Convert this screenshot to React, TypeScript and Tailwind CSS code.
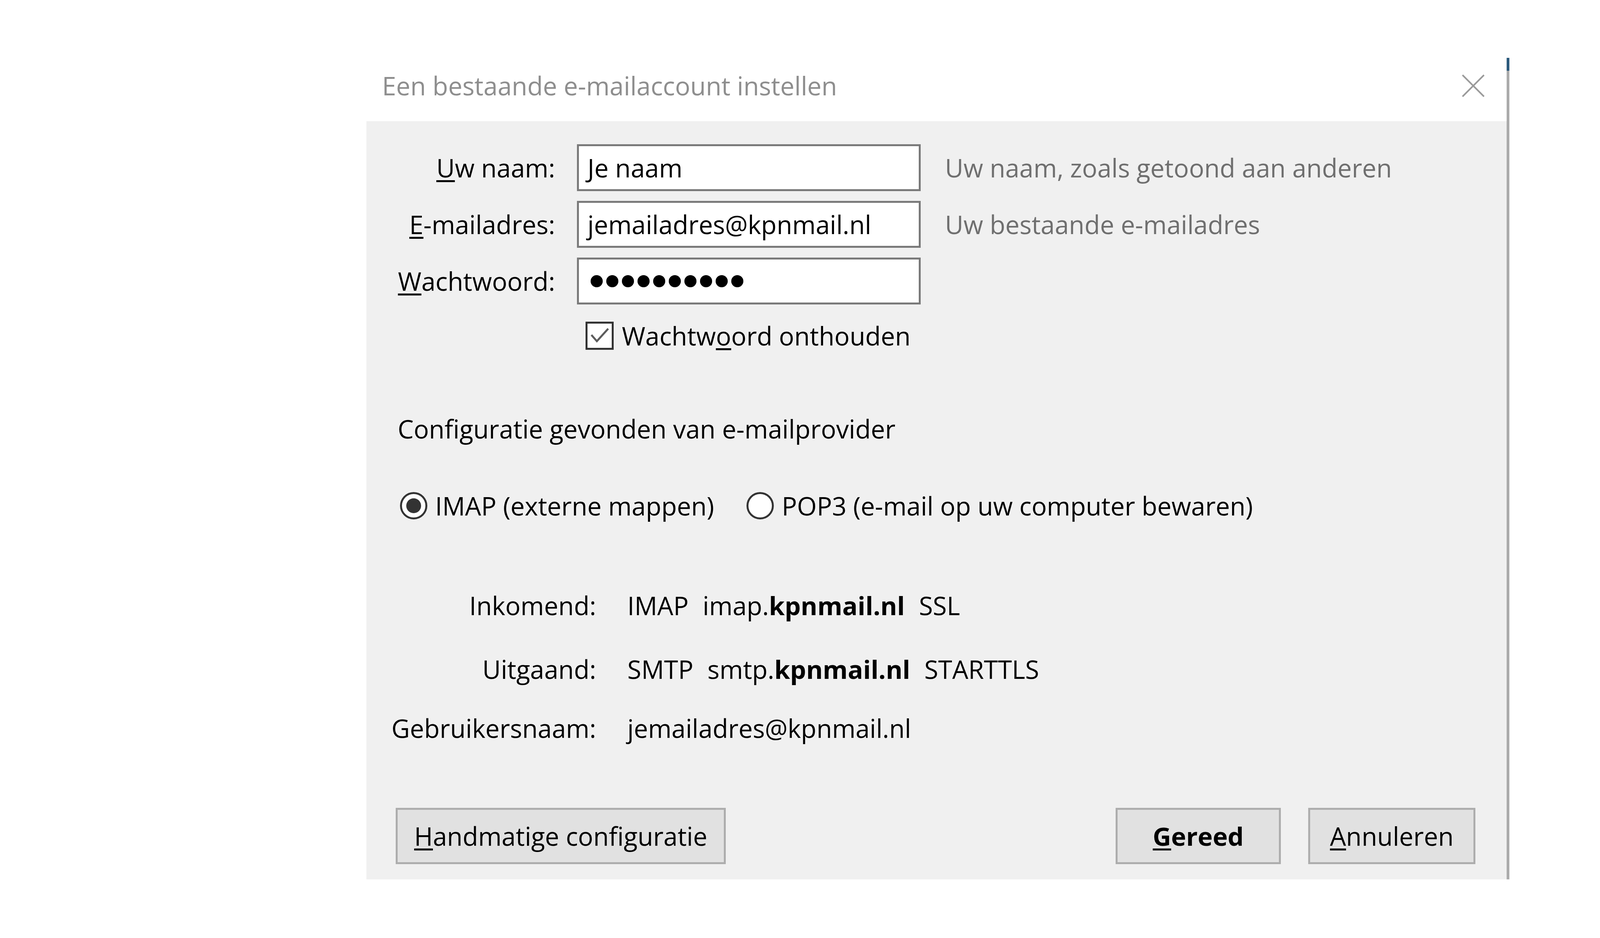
import React from 'react'

// Dialoog "Een bestaande e-mailaccount instellen" (Thunderbird, Windows-stijl)

const FONT = { fontFamily: '"Open Sans", "Noto Sans", Arial, sans-serif' }

function Mn({ children }: { children: React.ReactNode }) {
  // toegangstoets-onderstreping
  return <span className="underline decoration-[5px] underline-offset-[7px]">{children}</span>
}

function Field({ label, value, hint, password }: { label: React.ReactNode; value?: string; hint?: string; password?: boolean }) {
  return (
    <div className="flex items-center h-[120px]">
      <div className="w-[483px] text-right text-black leading-none">{label}</div>
      <div className="ml-[56px] w-[880px] h-[120px] bg-white border-[5px] border-[#7a7a7a] flex items-center pl-[22px] leading-none text-black">
        {password ? (
          <div className="flex gap-[9px] pl-[8px]">
            {Array.from({ length: 10 }).map((_, i) => (
              <span key={i} className="w-[31px] h-[31px] rounded-full bg-black" />
            ))}
          </div>
        ) : (
          value
        )}
      </div>
      {hint && <div className="ml-[62px] text-[#6f6f6f] leading-none">{hint}</div>}
    </div>
  )
}

function Radio({ checked, children }: { checked?: boolean; children: React.ReactNode }) {
  return (
    <div className="flex items-center">
      <span className="w-[70px] h-[70px] rounded-full border-[5px] border-[#333333] bg-white flex items-center justify-center">
        {checked && <span className="w-[38px] h-[38px] rounded-full bg-[#333333]" />}
      </span>
      <span className="ml-[20px] leading-none">{children}</span>
    </div>
  )
}

function ServerRow({ label, children }: { label: string; children: React.ReactNode }) {
  return (
    <div className="flex items-center h-[80px]">
      <div className="w-[588px] text-right leading-none">{label}</div>
      <div className="ml-[80px] flex items-center gap-[36px] leading-none">{children}</div>
    </div>
  )
}

function Btn({ children, w }: { children: React.ReactNode; w: string }) {
  return (
    <div className={`${w} h-[144px] bg-[#e1e1e1] border-[5px] border-[#adadad] flex items-center justify-center leading-none text-black`}>
      {children}
    </div>
  )
}

export default function App() {
  return (
    <div className="w-full h-screen overflow-hidden bg-white pt-[148px] pl-[938px] text-[65px]" style={FONT}>
      <div className="flex">
        <div className="w-[2919px]">
          {/* Titelbalk */}
          <div className="h-[162px] flex items-center justify-between pl-[40px] pr-[56px] pb-[20px]">
            <span className="text-[#8e8e8e] leading-none">Een bestaande e-mailaccount instellen</span>
            <svg width="59" height="59" viewBox="0 0 59 59">
              <path d="M2 2 L57 57 M57 2 L2 57" stroke="#9a9a9a" strokeWidth="4" fill="none" />
            </svg>
          </div>

          {/* Inhoud */}
          <div className="h-[1940px] bg-[#f0f0f0] flex flex-col pt-[59px] text-black">
            <Field label={<><Mn>U</Mn>w naam:</>} value="Je naam" hint="Uw naam, zoals getoond aan anderen" />
            <div className="mt-[25px]">
              <Field label={<><Mn>E</Mn>-mailadres:</>} value="jemailadres@kpnmail.nl" hint="Uw bestaande e-mailadres" />
            </div>
            <div className="mt-[25px]">
              <Field label={<><Mn>W</Mn>achtwoord:</>} password />
            </div>

            <div className="mt-[43px] h-[74px] flex items-center pl-[561px]">
              <span className="w-[72px] h-[72px] border-[5px] border-[#333333] bg-white flex items-center justify-center">
                <svg width="56" height="56" viewBox="0 0 56 56">
                  <path d="M7 26 L21 42 L50 10" stroke="#5c5c5c" strokeWidth="5" fill="none" />
                </svg>
              </span>
              <span className="ml-[21px] leading-none">Wachtw<Mn>o</Mn>ord onthouden</span>
            </div>

            <div className="mt-[166px] h-[70px] flex items-center pl-[80px] leading-none">
              Configuratie gevonden van e-mailprovider
            </div>

            <div className="mt-[125px] h-[74px] flex items-center pl-[86px] gap-[83px]">
              <Radio checked>IMAP (externe mappen)</Radio>
              <Radio>POP3 (e-mail op uw computer bewaren)</Radio>
            </div>

            <div className="mt-[178px]">
              <ServerRow label="Inkomend:">
                <span>IMAP</span>
                <span>imap.<b className="font-bold">kpnmail.nl</b></span>
                <span>SSL</span>
              </ServerRow>
            </div>
            <div className="mt-[83px]">
              <ServerRow label="Uitgaand:">
                <span>SMTP</span>
                <span>smtp.<b className="font-bold">kpnmail.nl</b></span>
                <span>STARTTLS</span>
              </ServerRow>
            </div>
            <div className="mt-[71px]">
              <ServerRow label="Gebruikersnaam:">
                <span>jemailadres@kpnmail.nl</span>
              </ServerRow>
            </div>

            {/* Knoppen */}
            <div className="mt-auto pb-[39px] pl-[75px] pr-[80px] flex justify-between">
              <Btn w="w-[845px]"><span><Mn>H</Mn>andmatige configuratie</span></Btn>
              <div className="flex gap-[70px]">
                <Btn w="w-[423px]"><span className="font-bold"><Mn>G</Mn>ereed</span></Btn>
                <Btn w="w-[428px]"><span><Mn>A</Mn>nnuleren</span></Btn>
              </div>
            </div>
          </div>
        </div>

        {/* Vensterrand rechts */}
        <div className="w-[7px] h-[2102px] bg-[#ababab] flex flex-col">
          <div className="h-[33px] bg-[#2c5a7c]" />
        </div>
      </div>
    </div>
  )
}
